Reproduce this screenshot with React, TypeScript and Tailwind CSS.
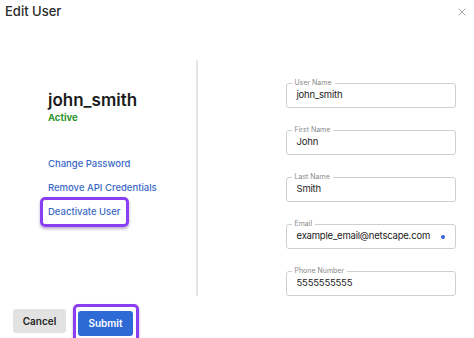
import React from 'react';
import { X } from 'lucide-react';

interface FieldProps {
  label: string;
  value: string;
  dot?: boolean;
}

const Field: React.FC<FieldProps> = ({ label, value, dot = false }) => (
  <div className="relative h-[25px] rounded-[3px] border border-[#cfcfcf] flex items-center pl-[10px] pr-[10px]">
    <span className="absolute -top-[6px] left-[5px] bg-white px-[3px] text-[7px] leading-[10px] text-[#8a8a8a]">
      {label}
    </span>
    <span className="flex-1 text-[9.5px] tracking-[-0.2px] text-[#222]">{value}</span>
    {dot && <span className="w-[4px] h-[4px] rounded-full bg-[#3b5fd4]"></span>}
  </div>
);

export default function App() {
  return (
    <div className="w-[474px] h-[338px] bg-white overflow-hidden font-['Inter',sans-serif]">
      <div className="h-[24px] flex items-center justify-between pl-[5px] pr-[6px]">
        <h1 className="text-[13px] font-medium text-[#2a2a2a]">Edit User</h1>
        <X size={12} strokeWidth={1.5} className="text-[#8a8a8a]" />
      </div>

      <div className="mt-[36px] h-[236px] flex">
        <div className="w-[196px] pl-[48px] pt-[29px] flex flex-col items-start">
          <div className="text-[17px] leading-[23px] font-semibold text-[#1a1a1a]">john_smith</div>
          <div className="text-[9.5px] leading-[12px] font-bold text-[#2c962c]">Active</div>

          <div className="mt-[33px] flex flex-col items-start gap-[10px] text-[9.5px] leading-[14px] font-medium text-[#3a69c6]">
            <span>Change Password</span>
            <span>Remove API Credentials</span>
            <span className="relative">
              Deactivate User
              <span className="absolute -left-[8px] -right-[9px] -top-[8px] -bottom-[8px] rounded-[5px] border-[3px] border-[#8b3ff2] shadow-[0_2px_3px_rgba(60,20,120,0.35)]"></span>
            </span>
          </div>
        </div>

        <div className="w-[1.5px] bg-[#e6e6e6]"></div>

        <div className="pl-[88px] pt-[23px] w-[258px] flex flex-col gap-[22px]">
          <Field label="User Name" value="john_smith" />
          <Field label="First Name" value="John" />
          <Field label="Last Name" value="Smith" />
          <Field label="Email" value="example_email@netscape.com" dot />
          <Field label="Phone Number" value="5555555555" />
        </div>
      </div>

      <div className="mt-[13px] pl-[13px] flex gap-[12px]">
        <button className="w-[53px] h-[24px] rounded-[3px] bg-[#e2e2e2] text-[10px] font-semibold text-[#222]">
          Cancel
        </button>
        <div className="relative">
          <button className="w-[55px] h-[25px] rounded-[3px] bg-[#2d6ad6] text-[10px] font-semibold text-white">
            Submit
          </button>
          <span className="absolute -left-[5px] -right-[6px] -top-[5px] -bottom-[6px] rounded-[5px] border-[3px] border-[#8b3ff2] shadow-[0_2px_3px_rgba(60,20,120,0.35)]"></span>
        </div>
      </div>
    </div>
  );
}
